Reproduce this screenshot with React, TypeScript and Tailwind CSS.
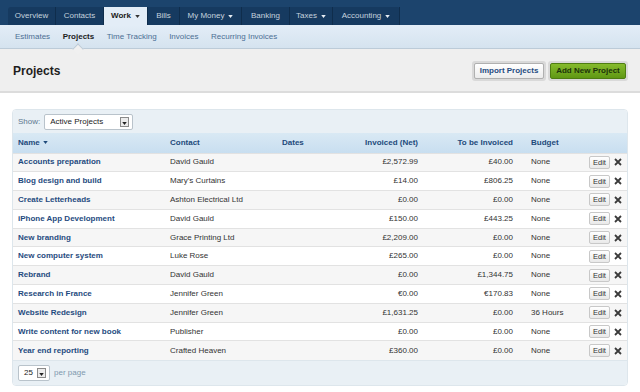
import React from "react";

const tabs = [
  { label: "Overview", w: "w-[48px]" },
  { label: "Contacts", w: "w-[48px]" },
  { label: "Work", w: "w-[44px]", caret: true, active: true },
  { label: "Bills", w: "w-[32px]" },
  { label: "My Money", w: "w-[62px]", caret: true },
  { label: "Banking", w: "w-[48px]" },
  { label: "Taxes", w: "w-[43px]", caret: true },
  { label: "Accounting", w: "w-[67px]", caret: true },
];

const subTabs = ["Estimates", "Projects", "Time Tracking", "Invoices", "Recurring Invoices"];

const projects = [
  ["Accounts preparation", "David Gauld", "£2,572.99", "£40.00", "None"],
  ["Blog design and build", "Mary's Curtains", "£14.00", "£806.25", "None"],
  ["Create Letterheads", "Ashton Electrical Ltd", "£0.00", "£0.00", "None"],
  ["iPhone App Development", "David Gauld", "£150.00", "£443.25", "None"],
  ["New branding", "Grace Printing Ltd", "£2,209.00", "£0.00", "None"],
  ["New computer system", "Luke Rose", "£265.00", "£0.00", "None"],
  ["Rebrand", "David Gauld", "£0.00", "£1,344.75", "None"],
  ["Research in France", "Jennifer Green", "€0.00", "€170.83", "None"],
  ["Website Redesign", "Jennifer Green", "£1,631.25", "£0.00", "36 Hours"],
  ["Write content for new book", "Publisher", "£0.00", "£0.00", "None"],
  ["Year end reporting", "Crafted Heaven", "£360.00", "£0.00", "None"],
];

function Caret({ className }: { className: string }) {
  return (
    <svg width="6" height="4" viewBox="0 0 6 4" className={className}>
      <path d="M0 0h6L3 4z" fill="currentColor" />
    </svg>
  );
}

function SelectBox({ label, w }: { label: string; w: string }) {
  return (
    <div className={`flex items-center justify-between h-[16px] ${w} bg-white border border-[#b9c3cb] rounded-[2px] pl-[5px] pr-[3px]`}>
      <span className="text-[8px] text-[#222]">{label}</span>
      <span className="flex items-end justify-center w-[9px] h-[10px] border border-[#8a8a8a] bg-[#ececec] pb-[1px]">
        <Caret className="text-[#222] w-[5px] h-[3px]" />
      </span>
    </div>
  );
}

export default function App() {
  return (
    <div className="w-[640px] h-[392px] bg-white overflow-hidden font-['Liberation_Sans',Arial,sans-serif]">
      {/* Main nav */}
      <div className="h-[25px] bg-[#1c446d] flex items-end pl-[8px]">
        <div className="flex h-[18px] bg-[#163a60] rounded-t-[3px]">
          {tabs.map((t) => (
            <div
              key={t.label}
              className={`${t.w} flex items-center justify-center gap-[4px] text-[8px] border-r border-[#0f2d4c] ${
                t.active ? "bg-[#e3edf7] text-[#1a1a1a] font-bold" : "text-[#c5d2de]"
              }`}
            >
              {t.label}
              {t.caret && <Caret className={t.active ? "text-[#333] w-[5px] h-[3px]" : "text-[#e8eef4] w-[5px] h-[3px]"} />}
            </div>
          ))}
        </div>
      </div>

      {/* Sub nav */}
      <div className="relative h-[24px] bg-gradient-to-b from-[#e3edf7] to-[#d5e3ef] border-b border-[#bccbd8] flex items-center pl-[15px] gap-[12.5px] text-[8px]">
        {subTabs.map((s) => (
          <span key={s} className={s === "Projects" ? "font-bold text-[#1c1c1c]" : "text-[#4c6f93]"}>
            {s}
          </span>
        ))}
        <div className="absolute left-[74px] bottom-[-5px] w-[8px] h-[8px] bg-[#f0f0f0] border-l border-t border-[#bccbd8] rotate-45" />
      </div>

      {/* Page header */}
      <div className="h-[44px] bg-[#efefef] border-b-2 border-[#dcdcdc] flex items-center justify-between pl-[13px] pr-[12px]">
        <h1 className="text-[12px] font-bold text-[#1e1e1e] pt-[2px]">Projects</h1>
        <div className="flex gap-[2px] pt-[2px]">
          <div className="p-[2px] bg-[#d9d9d9] rounded-[3px]">
            <div className="h-[16px] w-[70px] flex items-center justify-center bg-gradient-to-b from-white to-[#ececec] border border-[#b0b0b0] rounded-[2px] text-[8px] font-bold text-[#1f4b80]">
              Import Projects
            </div>
          </div>
          <div className="p-[2px] bg-[#d9d9d9] rounded-[3px]">
            <div className="h-[16px] w-[76px] flex items-center justify-center bg-gradient-to-b from-[#86bb2c] to-[#5f9813] border border-[#4e7d12] rounded-[2px] text-[8px] font-bold text-[#1c330a]">
              Add New Project
            </div>
          </div>
        </div>
      </div>

      {/* Panel */}
      <div className="mx-[12px] mt-[16px] rounded-[4px] border border-[#dde6ec] overflow-hidden">
        <div className="h-[23px] bg-[#e9f0f5] flex items-center gap-[4px] pl-[5px]">
          <span className="text-[8px] text-[#5d7890]">Show:</span>
          <SelectBox label="Active Projects" w="w-[89px]" />
        </div>
        <table className="w-full table-fixed border-collapse text-[8px]">
          <colgroup>
            <col className="w-[151px]" />
            <col className="w-[112px]" />
            <col className="w-[54px]" />
            <col className="w-[94px]" />
            <col className="w-[101px]" />
            <col className="w-[60px]" />
            <col className="w-[43px]" />
          </colgroup>
          <thead>
            <tr className="h-[20px] bg-gradient-to-b from-[#d9e9f4] to-[#c8def0] text-[#1e4a7b] font-bold">
              <th className="text-left pl-[5px]">
                <span className="inline-flex items-center gap-[3px]">
                  Name <Caret className="text-[#1e4a7b] w-[5px] h-[3px]" />
                </span>
              </th>
              <th className="text-left pl-[6px]">Contact</th>
              <th className="text-left pl-[6px]">Dates</th>
              <th className="text-right pr-[6px]">Invoiced (Net)</th>
              <th className="text-right pr-[12px]">To be Invoiced</th>
              <th className="text-left pl-[6px]">Budget</th>
              <th />
            </tr>
          </thead>
          <tbody>
            {projects.map((p, i) => (
              <tr key={p[0]} className={`h-[18.8px] border-t border-[#e2e2e2] ${i % 2 === 0 ? "bg-[#f6f6f6]" : "bg-white"}`}>
                <td className="pl-[5px] font-bold text-[#1f4b80] whitespace-nowrap">{p[0]}</td>
                <td className="pl-[6px] text-[#333]">{p[1]}</td>
                <td />
                <td className="text-right pr-[6px] text-[#333]">{p[2]}</td>
                <td className="text-right pr-[12px] text-[#333]">{p[3]}</td>
                <td className="pl-[6px] text-[#333]">{p[4]}</td>
                <td>
                  <div className="flex items-center gap-[4px] pl-[4px]">
                    <span className="h-[13px] w-[21px] flex items-center justify-center border border-[#c8c8c8] bg-gradient-to-b from-white to-[#e9e9e9] rounded-[2px] text-[7.5px] text-[#333]">
                      Edit
                    </span>
                    <svg width="8" height="8" viewBox="0 0 8 8">
                      <path d="M1 1l6 6M7 1L1 7" stroke="#3a3a3a" strokeWidth="1.8" />
                    </svg>
                  </div>
                </td>
              </tr>
            ))}
          </tbody>
        </table>
        <div className="h-[25px] bg-[#e9f0f5] border-t border-[#dde6ec] flex items-center gap-[4px] pl-[5px]">
          <SelectBox label="25" w="w-[32px]" />
          <span className="text-[8px] text-[#7f98ae]">per page</span>
        </div>
      </div>
    </div>
  );
}
